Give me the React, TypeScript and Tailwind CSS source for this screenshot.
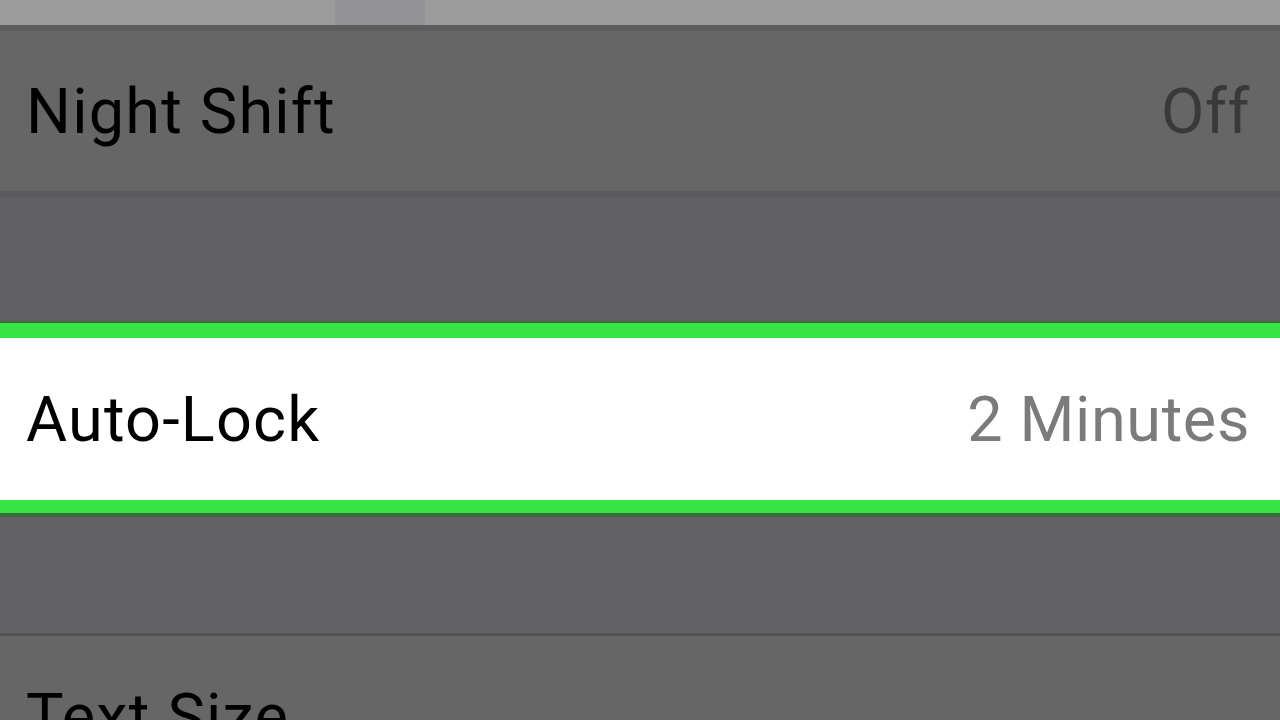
const font = { fontFamily: 'Roboto, "Liberation Sans", sans-serif' };

function Row({ label, value, light }: { label: string; value?: string; light?: boolean }) {
  return (
    <div
      className={`flex items-center justify-between pl-[26px] pr-[30px] ${light ? 'h-[162px] bg-white' : 'h-[160px] bg-[#666666]'}`}
    >
      <span className="text-[63px] leading-none text-black tracking-[1.2px]">{label}</span>
      {value && (
        <span className={`text-[63px] leading-none tracking-[0.6px] ${light ? 'text-[#7b7b7b]' : 'text-[#393939]'}`}>
          {value}
        </span>
      )}
    </div>
  );
}

export default function App() {
  return (
    <div className="w-[1280px] h-[720px] overflow-hidden bg-[#626266]" style={font}>
      {/* ── Top strip ── */}
      <div className="flex h-[25px] bg-[#9c9c9c] pl-[335px]">
        <div className="w-[90px] h-full bg-[#929297]" />
      </div>
      <div className="h-[6px] bg-[#5c5c5c]" />

      <Row label="Night Shift" value="Off" />
      <div className="h-[6px] bg-[#5a5a5c]" />

      {/* ── Section gap ── */}
      <div className="h-[124px] bg-[#616165]" />

      {/* ── Highlighted row ── */}
      <div className="h-[17px] bg-[#36e446] border-t-[2px] border-[#3a6c3e]" />
      <Row label="Auto-Lock" value="2 Minutes" light />
      <div className="h-[17px] bg-[#36e446] border-b-[4px] border-[#3a6c3e]" />

      <div className="h-[116px] bg-[#626266]" />
      <div className="h-[3px] bg-[#525254]" />

      <Row label="Text Size" />
    </div>
  );
}
